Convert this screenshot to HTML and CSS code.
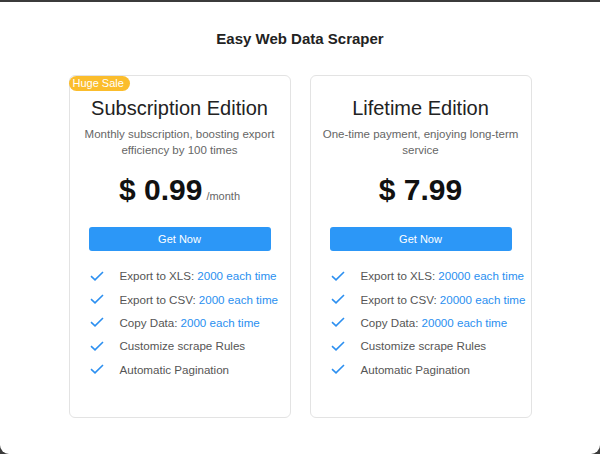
FILE: index.html
```html
<!DOCTYPE html>
<html lang="en">
<head>
    <meta charset="UTF-8">
    <title>Easy Web Data Scraper</title>
    <link rel="stylesheet" href="styles.css">
</head>
<body>
<div class="dialog">
  <div class="dialog_title">Easy Web Data Scraper</div>
  <div class="plans">
    <div class="plan">
      <div class="badge">Huge Sale</div>
      <div class="plan_name">Subscription Edition</div>
      <div class="plan_desc">Monthly subscription, boosting export efficiency by 100 times</div>
      <div class="plan_price">$ 0.99<span class="unit">/month</span></div>
      <div class="btn">Get Now</div>
      <ul class="features">
        <li><svg class="check" viewBox="0 0 14 10"><path d="M1 5.2 L5 8.8 L13 1"/></svg>Export to XLS: <span class="hl">2000 each time</span></li>
        <li><svg class="check" viewBox="0 0 14 10"><path d="M1 5.2 L5 8.8 L13 1"/></svg>Export to CSV: <span class="hl">2000 each time</span></li>
        <li><svg class="check" viewBox="0 0 14 10"><path d="M1 5.2 L5 8.8 L13 1"/></svg>Copy Data: <span class="hl">2000 each time</span></li>
        <li><svg class="check" viewBox="0 0 14 10"><path d="M1 5.2 L5 8.8 L13 1"/></svg>Customize scrape Rules</li>
        <li><svg class="check" viewBox="0 0 14 10"><path d="M1 5.2 L5 8.8 L13 1"/></svg>Automatic Pagination</li>
      </ul>
    </div>
    <div class="plan">
      <div class="plan_name">Lifetime Edition</div>
      <div class="plan_desc">One-time payment, enjoying long-term service</div>
      <div class="plan_price">$ 7.99</div>
      <div class="btn">Get Now</div>
      <ul class="features">
        <li><svg class="check" viewBox="0 0 14 10"><path d="M1 5.2 L5 8.8 L13 1"/></svg>Export to XLS: <span class="hl">20000 each time</span></li>
        <li><svg class="check" viewBox="0 0 14 10"><path d="M1 5.2 L5 8.8 L13 1"/></svg>Export to CSV: <span class="hl">20000 each time</span></li>
        <li><svg class="check" viewBox="0 0 14 10"><path d="M1 5.2 L5 8.8 L13 1"/></svg>Copy Data: <span class="hl">20000 each time</span></li>
        <li><svg class="check" viewBox="0 0 14 10"><path d="M1 5.2 L5 8.8 L13 1"/></svg>Customize scrape Rules</li>
        <li><svg class="check" viewBox="0 0 14 10"><path d="M1 5.2 L5 8.8 L13 1"/></svg>Automatic Pagination</li>
      </ul>
    </div>
  </div>
</div>
</body>
</html>
```

FILE: styles.css
```css
body, html {
  margin: 0;
}
body {
  background: #3b3b3b;
  font-family: "Liberation Sans", Arial, sans-serif;
  color: #222;
}
.dialog {
  margin-top: 2px;
  height: 452px;
  background: #fff;
  border-radius: 0 0 9px 9px;
  box-sizing: border-box;
  padding-top: 29px;
}
.dialog_title {
  text-align: center;
  font-size: 15px;
  font-weight: bold;
  line-height: 16px;
}
.plans {
  display: flex;
  justify-content: center;
  gap: 19px;
  margin-top: 28px;
}
.plan {
  position: relative;
  width: 222px;
  height: 343px;
  box-sizing: border-box;
  border: 1px solid #e3e3e3;
  border-radius: 6px;
  padding: 20px 19px 0;
  text-align: center;
}
.badge {
  position: absolute;
  left: -1px;
  top: 0;
  height: 15px;
  line-height: 15px;
  padding: 0 6px 0 4px;
  background: #fbbd2c;
  color: #fff;
  font-size: 11px;
  border-radius: 8px;
}
.plan_name {
  font-size: 20px;
  line-height: 24px;
  color: #222;
}
.plan_desc {
  margin: 6px -12px 0;
  font-size: 11.5px;
  line-height: 16px;
  color: #666;
}
.plan_price {
  margin-top: 15px;
  font-size: 30px;
  font-weight: bold;
  line-height: 34px;
  height: 34px;
  color: #111;
}
.unit {
  margin-left: 4px;
  font-size: 11px;
  font-weight: normal;
  color: #666;
}
.btn {
  margin-top: 20px;
  height: 24px;
  line-height: 24px;
  background: #2c97f7;
  color: #fff;
  font-size: 11px;
  border-radius: 3px;
}
.features {
  list-style: none;
  margin: 13px 0 0;
  padding: 0;
  text-align: left;
}
.features li {
  display: flex;
  align-items: center;
  height: 23.4px;
  font-size: 11.6px;
  color: #555;
  white-space: nowrap;
}
.check {
  flex-shrink: 0;
  width: 14px;
  height: 10px;
  margin: 0 16px 0 1px;
  fill: none;
  stroke: #2c8ff0;
  stroke-width: 1.6;
}
.hl {
  color: #2a8ff0;
  margin-left: 3px;
}
```
